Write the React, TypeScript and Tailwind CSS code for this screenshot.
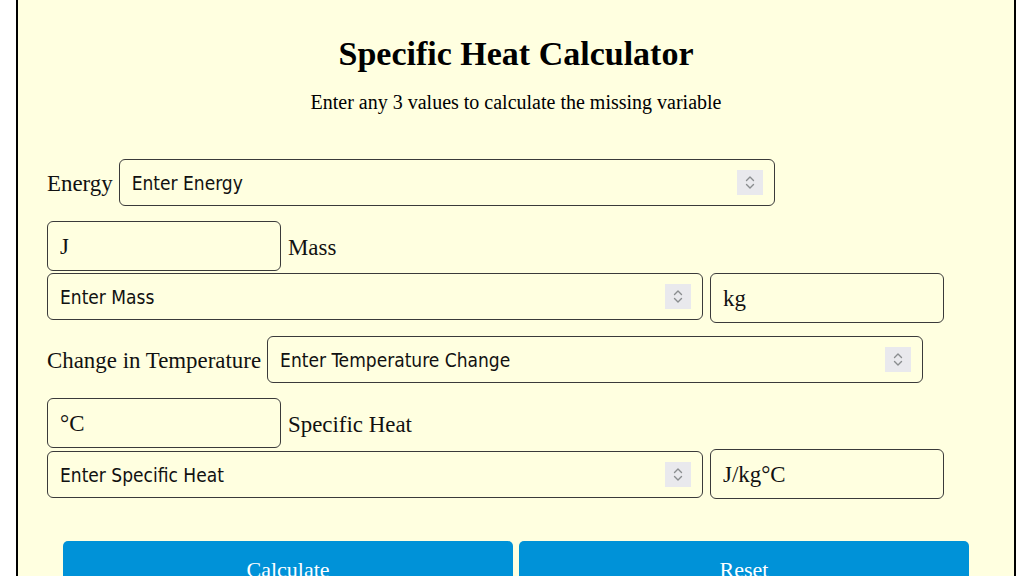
import React from "react";

const serif = "font-['Liberation_Serif','Times_New_Roman',serif]";
const sans = "font-['DejaVu_Sans_Condensed','DejaVu_Sans',sans-serif]";

function Spinner() {
  return (
    <div className="w-[26px] h-[25px] bg-[#e9e9ed] shrink-0">
      <svg width="26" height="25" viewBox="0 0 26 25" fill="none">
        <polyline points="9.5,10.5 13,7 16.5,10.5" stroke="#8a8d8f" strokeWidth="1.4" strokeLinecap="round" strokeLinejoin="round" />
        <polyline points="9.5,14.5 13,18 16.5,14.5" stroke="#8a8d8f" strokeWidth="1.4" strokeLinecap="round" strokeLinejoin="round" />
      </svg>
    </div>
  );
}

function NumberBox({ placeholder }: { placeholder: string }) {
  return (
    <div className="w-[656px] h-[47px] shrink-0 flex items-center border border-[#3a3a3a] rounded-[6px] pl-[12px] pr-[11px]">
      <input
        type="text"
        placeholder={placeholder}
        className={`${sans} flex-1 min-w-0 pt-[2px] bg-transparent outline-none text-[19px] text-[#111] placeholder:text-[#111] placeholder:opacity-100`}
      />
      <Spinner />
    </div>
  );
}

function UnitBox({ value }: { value: string }) {
  return (
    <input
      type="text"
      readOnly
      value={value}
      className={`${serif} w-[234px] h-[50px] shrink-0 border border-[#3a3a3a] rounded-[6px] pl-[12px] pt-[1px] bg-transparent outline-none text-[22.9px] text-[#111]`}
    />
  );
}

function Label({ children }: { children: React.ReactNode }) {
  return <span className={`${serif} text-[22.9px] text-[#111] leading-none pt-[4px] whitespace-nowrap`}>{children}</span>;
}

export default function App() {
  return (
    <div className="min-h-screen bg-white">
      <div className={`${serif} ml-[16px] w-[1000px] min-h-[576px] bg-[#ffffe0] border-x-2 border-black px-[29px] pb-[40px]`}>
        <h1 className="text-[34px] font-bold text-center leading-[40px] pt-[34px] text-black">
          Specific Heat Calculator
        </h1>
        <p className="text-[20px] text-center leading-[24px] mt-[16px] text-black">
          Enter any 3 values to calculate the missing variable
        </p>

        <div className="flex flex-col">
          <div className="flex items-center gap-[6px] mt-[45px]">
            <Label>Energy</Label>
            <NumberBox placeholder="Enter Energy" />
          </div>
          <div className="flex items-center gap-[7px] mt-[15px]">
            <UnitBox value="J" />
            <Label>Mass</Label>
          </div>
          <div className="flex items-start gap-[7px] mt-[2px]">
            <NumberBox placeholder="Enter Mass" />
            <UnitBox value="kg" />
          </div>
          <div className="flex items-center gap-[6px] mt-[13px]">
            <Label>Change in Temperature</Label>
            <NumberBox placeholder="Enter Temperature Change" />
          </div>
          <div className="flex items-center gap-[7px] mt-[15px]">
            <UnitBox value="°C" />
            <Label>Specific Heat</Label>
          </div>
          <div className="flex items-center gap-[7px] mt-[1px]">
            <NumberBox placeholder="Enter Specific Heat" />
            <UnitBox value="J/kg°C" />
          </div>
        </div>

        <div className="flex justify-center gap-[6px] mt-[42px]">
          <button className="w-[450px] h-[56px] bg-[#0092d8] rounded-[5px] text-white text-[22px]">
            Calculate
          </button>
          <button className="w-[450px] h-[56px] bg-[#0092d8] rounded-[5px] text-white text-[22px]">
            Reset
          </button>
        </div>
      </div>
    </div>
  );
}
